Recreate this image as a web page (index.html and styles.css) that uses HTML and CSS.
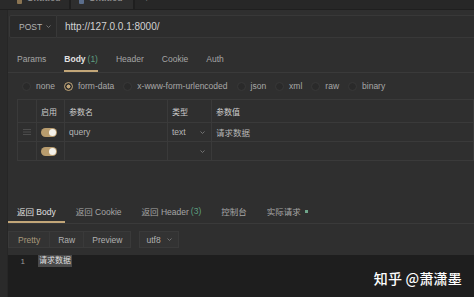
FILE: index.html
```html
<!DOCTYPE html>
<html lang="zh">
<head>
    <meta charset="UTF-8">
    <meta name="viewport" content="width=device-width, initial-scale=1.0">
    <title>Request</title>
    <link rel="stylesheet" href="styles.css">
</head>
<body>
    <div class="tabbar">
        <div class="doc-tab">
            <span class="doc-icon brown"></span>
            <span class="doc-name">Untitled</span>
        </div>
        <div class="doc-tab active">
            <span class="doc-icon blue"></span>
            <span class="doc-name">Untitled</span>
        </div>
        <div class="doc-add">+</div>
    </div>
    <div class="app">
        <div class="side"></div>
        <div class="panel">
            <div class="url-row">
                <div class="method">
                    <span>POST</span>
                    <svg class="chev" width="5" height="3" viewBox="0 0 5 3"><polyline points="0.5,0.5 2.5,2.5 4.5,0.5"/></svg>
                </div>
                <div class="url">http://127.0.0.1:8000/</div>
            </div>

            <nav class="req-tabs">
                <a href="#">Params</a>
                <a href="#" class="active">Body <span class="count">(1)</span></a>
                <a href="#">Header</a>
                <a href="#">Cookie</a>
                <a href="#">Auth</a>
            </nav>

            <div class="body-types">
                <label class="radio"><span class="dot"></span>none</label>
                <label class="radio checked"><span class="dot"></span>form-data</label>
                <label class="radio"><span class="dot"></span>x-www-form-urlencoded</label>
                <label class="radio"><span class="dot"></span>json</label>
                <label class="radio"><span class="dot"></span>xml</label>
                <label class="radio"><span class="dot"></span>raw</label>
                <label class="radio"><span class="dot"></span>binary</label>
            </div>

            <div class="params">
                <div class="cell head"></div>
                <div class="cell head">启用</div>
                <div class="cell head">参数名</div>
                <div class="cell head">类型</div>
                <div class="cell head">参数值</div>

                <div class="cell center">
                    <svg class="handle" width="8" height="6" viewBox="0 0 8 6"><path d="M0 0.5H8M0 3H8M0 5.5H8"/></svg>
                </div>
                <div class="cell"><span class="toggle"></span></div>
                <div class="cell">query</div>
                <div class="cell split">text
                    <svg class="chev" width="5" height="3" viewBox="0 0 5 3"><polyline points="0.5,0.5 2.5,2.5 4.5,0.5"/></svg>
                </div>
                <div class="cell">请求数据</div>

                <div class="cell"></div>
                <div class="cell"><span class="toggle"></span></div>
                <div class="cell"></div>
                <div class="cell split"><span></span>
                    <svg class="chev" width="5" height="3" viewBox="0 0 5 3"><polyline points="0.5,0.5 2.5,2.5 4.5,0.5"/></svg>
                </div>
                <div class="cell"></div>
            </div>

            <nav class="res-tabs">
                <a href="#" class="active">返回 Body</a>
                <a href="#">返回 Cookie</a>
                <a href="#">返回 Header <span class="count">(3)</span></a>
                <a href="#">控制台</a>
                <a href="#">实际请求<span class="live"></span></a>
            </nav>

            <div class="view-row">
                <div class="segments">
                    <span class="seg active">Pretty</span>
                    <span class="seg">Raw</span>
                    <span class="seg">Preview</span>
                </div>
                <div class="charset">utf8
                    <svg class="chev" width="5" height="3" viewBox="0 0 5 3"><polyline points="0.5,0.5 2.5,2.5 4.5,0.5"/></svg>
                </div>
            </div>

            <div class="code">
                <div class="code-line">
                    <span class="line-no">1</span>
                    <span class="line-text">请求数据</span>
                </div>
            </div>
        </div>
    </div>
    <div class="watermark">知乎 @萧潇墨</div>
</body>
</html>
```

FILE: styles.css
```css
* {
    box-sizing: border-box;
}
body {
    margin: 0;
    width: 474px;
    height: 297px;
    overflow: hidden;
    position: relative;
    background-color: #2f2f2f;
    color: #a6a6a6;
    font-family: "Liberation Sans", "Noto Sans CJK SC", sans-serif;
    font-size: 8.5px;
}
a {
    color: inherit;
    text-decoration: none;
}
.tabbar {
    display: flex;
    height: 10px;
    background-color: #272727;
    border-bottom: 1px solid #1f1f1f;
    overflow: hidden;
}
.doc-tab {
    display: flex;
    align-items: flex-start;
    gap: 5px;
    width: 71px;
    padding-left: 17px;
    border-right: 2px solid #1f1f1f;
    background-color: #2a2a2a;
}
.doc-tab.active {
    width: 64px;
    padding-left: 8px;
    background-color: #2e2e2e;
}
.doc-icon {
    width: 5px;
    height: 9px;
    margin-top: -5px;
    border-radius: 1px;
}
.doc-icon.brown {
    background-color: #8a7452;
}
.doc-icon.blue {
    background-color: #5b6e8c;
}
.doc-name {
    margin-top: -7px;
    font-size: 9px;
    line-height: 11px;
    color: #8c8c8c;
    font-weight: bold;
}
.doc-add {
    margin-left: 9px;
    margin-top: -6px;
    font-size: 9px;
    color: #777;
}
.app {
    display: flex;
    height: 287px;
}
.side {
    width: 8px;
    background-color: #2a2a2a;
    border-right: 1px solid #262626;
}
.panel {
    flex: 1;
    display: flex;
    flex-direction: column;
    min-width: 0;
}
.chev {
    fill: none;
    stroke: #7a7a7a;
    stroke-width: 0.9;
}
.url-row {
    display: flex;
    height: 23px;
    margin: 5px -2px 0 1px;
}
.method {
    display: flex;
    align-items: center;
    justify-content: space-between;
    width: 48px;
    padding: 0 5px 0 9px;
    background-color: #2a2a2a;
    border: 1px solid #383838;
    border-radius: 2px 0 0 2px;
    color: #b4b4b4;
}
.url {
    flex: 1;
    display: flex;
    align-items: center;
    padding-left: 8px;
    background-color: #2d2d2d;
    border: 1px solid #383838;
    border-left: none;
    color: #d2d2d2;
    font-size: 10px;
}
.req-tabs {
    display: flex;
    gap: 18px;
    height: 26px;
    margin-top: 9px;
    padding-left: 9px;
    border-bottom: 1px solid #3a3a3a;
}
.req-tabs a {
    display: flex;
    align-items: center;
    gap: 2px;
    border-bottom: 2px solid transparent;
}
.req-tabs a.active {
    color: #e2e2e2;
    font-weight: bold;
    border-bottom-color: #c2a678;
}
.count {
    color: #5e9f80;
    font-weight: normal;
}
.body-types {
    display: flex;
    align-items: center;
    gap: 9px;
    height: 26px;
    padding-left: 14px;
    color: #a8a8a8;
}
.radio {
    display: flex;
    align-items: center;
    gap: 5px;
}
.radio .dot {
    width: 9px;
    height: 9px;
    border-radius: 50%;
    border: 1px solid #383838;
    background-color: #2a2a2a;
}
.radio.checked .dot {
    border: 1.5px solid #c2a678;
    background: radial-gradient(circle, #c2a678 0 1.8px, transparent 2.2px);
}
.params {
    display: grid;
    grid-template-columns: 19px 28px 103px 44px 1fr;
    grid-template-rows: 23px 19px 19px;
    margin-left: 9px;
    border-top: 1px solid #3a3a3a;
    border-left: 1px solid #3a3a3a;
}
.cell {
    display: flex;
    align-items: center;
    padding: 0 4px;
    border-right: 1px solid #3a3a3a;
    border-bottom: 1px solid #3a3a3a;
    color: #b6b6b6;
    font-size: 8.5px;
    white-space: nowrap;
}
.cell.head {
    color: #cdcdcd;
    font-size: 8px;
}
.cell.center {
    justify-content: center;
}
.cell.split {
    justify-content: space-between;
    padding-right: 6px;
}
.handle {
    fill: none;
    stroke: #555;
    stroke-width: 0.8;
}
.toggle {
    position: relative;
    width: 16px;
    height: 9px;
    border-radius: 5px;
    background-color: #b89c6e;
}
.toggle::after {
    content: "";
    position: absolute;
    right: 1px;
    top: 1px;
    width: 7px;
    height: 7px;
    border-radius: 50%;
    background-color: #f4f1ea;
}
.res-tabs {
    display: flex;
    gap: 2px;
    height: 23px;
    margin-top: 40px;
    border-bottom: 1px solid #3a3a3a;
}
.res-tabs a {
    display: flex;
    align-items: center;
    gap: 2px;
    padding: 0 9px;
    border-bottom: 2px solid transparent;
}
.res-tabs a.active {
    color: #e0e0e0;
    border-bottom-color: #c2a678;
}
.live {
    width: 3px;
    height: 3px;
    margin-left: 2px;
    background-color: #6fa58a;
}
.view-row {
    display: flex;
    align-items: center;
    gap: 8px;
    margin-top: 7px;
    height: 17px;
}
.segments {
    display: flex;
    height: 100%;
    border: 1px solid #3a3a3a;
}
.seg {
    display: flex;
    align-items: center;
    padding: 0 8px;
    background-color: #333;
    border-right: 1px solid #3a3a3a;
    color: #b0b0b0;
}
.seg:last-child {
    border-right: none;
}
.seg.active {
    color: #a8997c;
    padding: 0 9px;
}
.charset {
    display: flex;
    align-items: center;
    gap: 6px;
    height: 100%;
    padding: 0 6px 0 6px;
    background-color: #333;
    border: 1px solid #3a3a3a;
    color: #b0b0b0;
}
.code {
    flex: 1;
    margin-top: 7px;
    background-color: #1e1e1e;
}
.code-line {
    display: flex;
    align-items: center;
    gap: 13px;
    height: 12px;
    font-size: 8px;
}
.line-no {
    width: 17px;
    text-align: right;
    color: #9a9a9a;
}
.line-text {
    padding: 0 1px;
    line-height: 12px;
    background-color: #4a4a4a;
    color: #dedede;
}
.watermark {
    position: absolute;
    right: 12px;
    top: 268px;
    color: #fff;
    font-family: "Noto Sans CJK SC", sans-serif;
    font-size: 14px;
    font-weight: 500;
    letter-spacing: 0.2px;
}
```
